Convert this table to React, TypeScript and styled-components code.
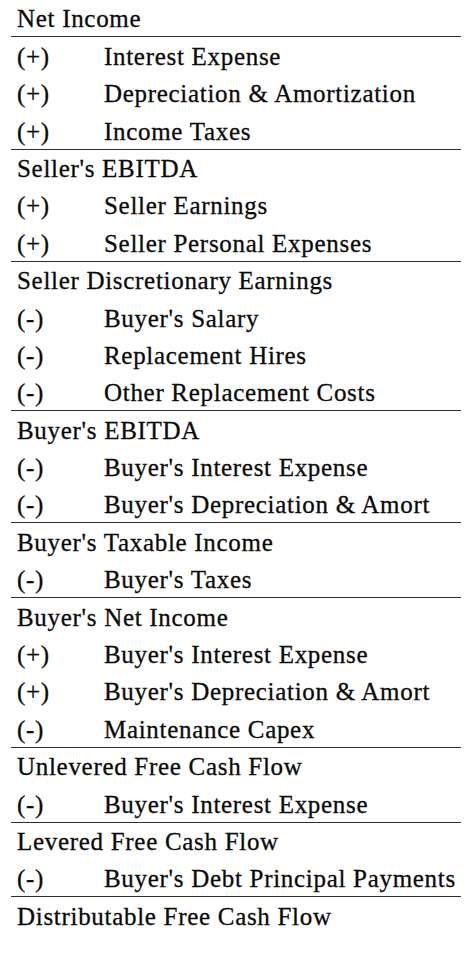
import styled, { createGlobalStyle } from "styled-components";

const Global = createGlobalStyle`
  body {
    margin: 0;
    background: #ffffff;
  }
`;

type Line = { sign?: string; label: string; rule?: boolean };

const lines: Line[] = [
  { label: "Net Income", rule: true },
  { sign: "(+)", label: "Interest Expense" },
  { sign: "(+)", label: "Depreciation & Amortization" },
  { sign: "(+)", label: "Income Taxes", rule: true },
  { label: "Seller's EBITDA" },
  { sign: "(+)", label: "Seller Earnings" },
  { sign: "(+)", label: "Seller Personal Expenses", rule: true },
  { label: "Seller Discretionary Earnings" },
  { sign: "(-)", label: "Buyer's Salary" },
  { sign: "(-)", label: "Replacement Hires" },
  { sign: "(-)", label: "Other Replacement Costs", rule: true },
  { label: "Buyer's EBITDA" },
  { sign: "(-)", label: "Buyer's Interest Expense" },
  { sign: "(-)", label: "Buyer's Depreciation & Amort", rule: true },
  { label: "Buyer's Taxable Income" },
  { sign: "(-)", label: "Buyer's Taxes", rule: true },
  { label: "Buyer's Net Income" },
  { sign: "(+)", label: "Buyer's Interest Expense" },
  { sign: "(+)", label: "Buyer's Depreciation & Amort" },
  { sign: "(-)", label: "Maintenance Capex", rule: true },
  { label: "Unlevered Free Cash Flow" },
  { sign: "(-)", label: "Buyer's Interest Expense", rule: true },
  { label: "Levered Free Cash Flow" },
  { sign: "(-)", label: "Buyer's Debt Principal Payments", rule: true },
  { label: "Distributable Free Cash Flow" },
];

const Sheet = styled.div`
  width: 450px;
  margin-left: 11px;
  font-family: "Liberation Serif", "Times New Roman", serif;
  font-size: 25px;
  letter-spacing: 0.7px;
  color: #0a0a0a;
  -webkit-text-stroke: 0.3px #0a0a0a;
`;

const Row = styled.div<{ $rule?: boolean }>`
  display: flex;
  align-items: flex-end;
  box-sizing: border-box;
  height: 37.4px;
  padding: 0 0 5px 6px;
  line-height: 1;
  border-bottom: 1.5px solid ${(p) => (p.$rule ? "#2e2e2e" : "transparent")};
  white-space: nowrap;
`;

const Sign = styled.span`
  width: 87px;
  flex: none;
`;

const Label = styled.span``;

export default function App() {
  return (
    <>
      <Global />
      <Sheet>
        {lines.map((l, i) => (
          <Row key={i} $rule={l.rule}>
            {l.sign && <Sign>{l.sign}</Sign>}
            <Label>{l.label}</Label>
          </Row>
        ))}
      </Sheet>
    </>
  );
}
